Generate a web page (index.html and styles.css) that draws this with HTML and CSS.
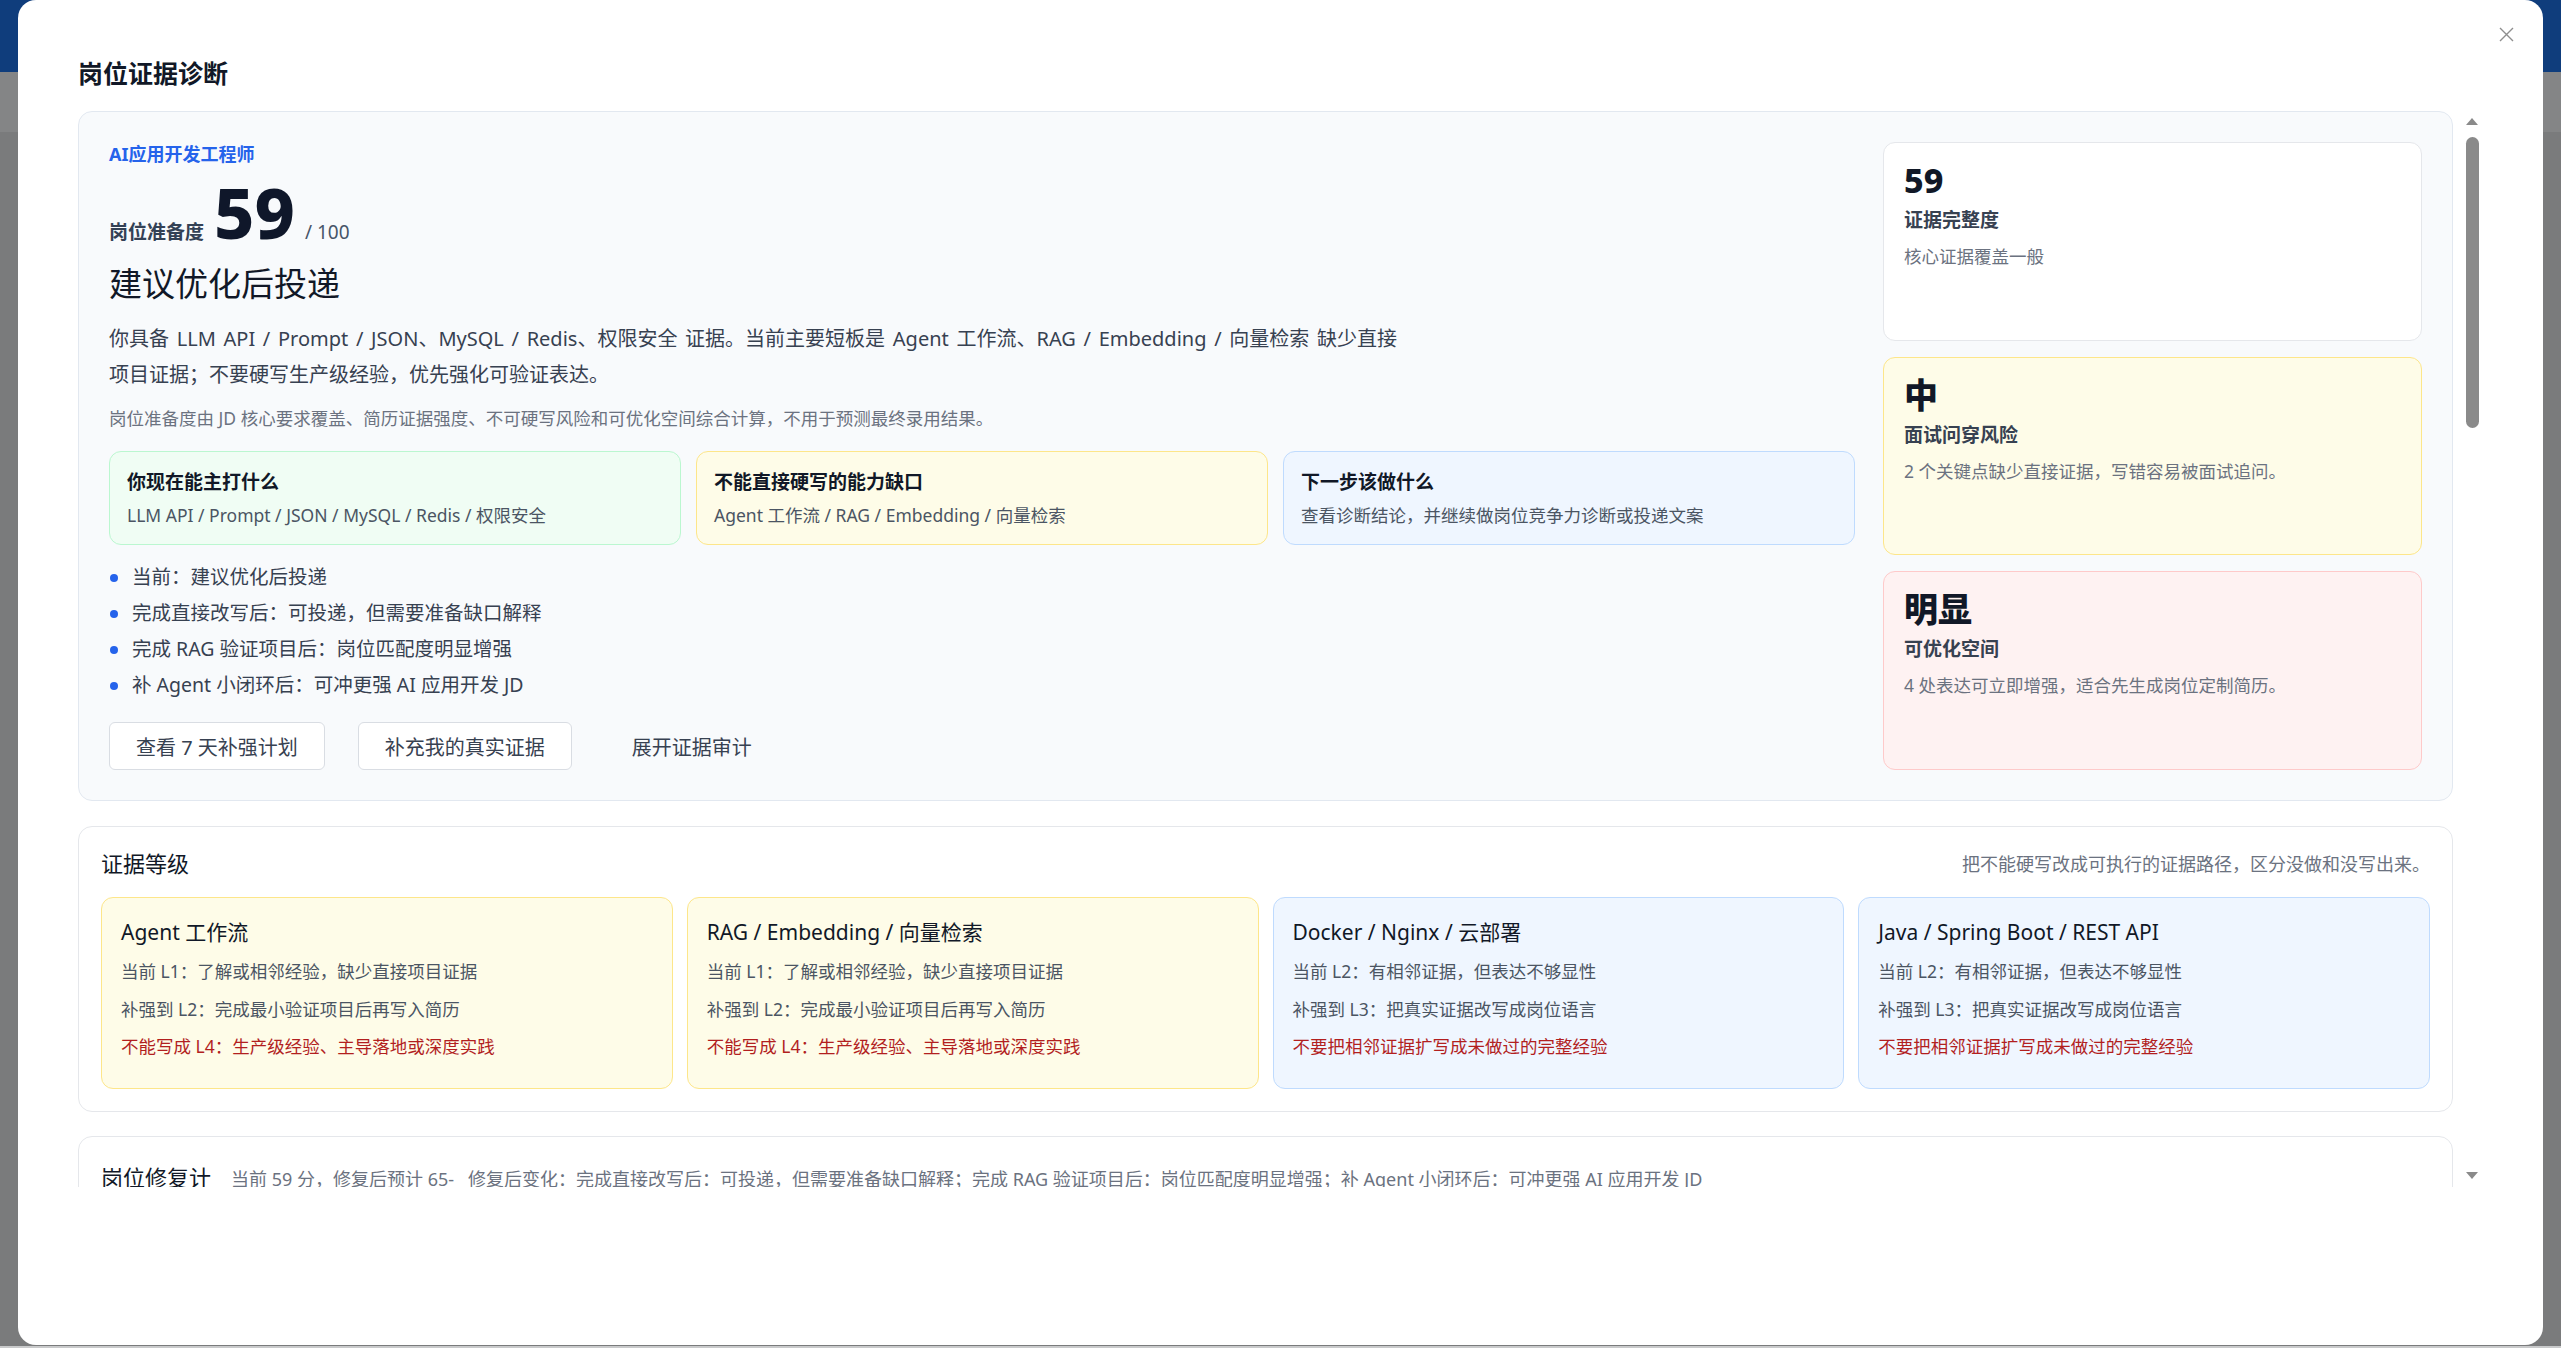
FILE: index.html
```
<!DOCTYPE html>
<html lang="zh-CN">
<head>
  <meta charset="utf-8" />
  <title>岗位证据诊断</title>
  <link rel="stylesheet" href="styles.css">
</head>
<body>
  <!-- 背景页面（被遮罩压暗） -->
  <div class="page">
    <div class="page-top"></div>
    <div class="page-nav"></div>
    <div class="page-body"></div>
    <div class="page-foot"></div>
  </div>

  <div class="modal">
    <button class="modal-close" aria-label="关闭">
      <svg width="15" height="15" viewBox="0 0 15 15"><path d="M1 1 L14 14 M14 1 L1 14" stroke="#8e8e8e" stroke-width="1.4" fill="none"/></svg>
    </button>
    <h1 class="modal-title">岗位证据诊断</h1>

    <div class="modal-body">
      <div class="scroll">

        <!-- 1. 总览 -->
        <section class="hero">
          <div class="hero-main">
            <div class="role">AI应用开发工程师</div>
            <div class="score-row">
              <span class="score-label">岗位准备度</span>
              <span class="score">59</span>
              <span class="score-max">/ 100</span>
            </div>
            <h2 class="verdict">建议优化后投递</h2>
            <p class="summary">你具备 LLM API / Prompt / JSON、MySQL / Redis、权限安全 证据。当前主要短板是 Agent 工作流、RAG / Embedding / 向量检索 缺少直接项目证据；不要硬写生产级经验，优先强化可验证表达。</p>
            <p class="note">岗位准备度由 JD 核心要求覆盖、简历证据强度、不可硬写风险和可优化空间综合计算，不用于预测最终录用结果。</p>

            <div class="focus-grid">
              <div class="focus-card green">
                <div class="focus-title">你现在能主打什么</div>
                <div class="focus-sub">LLM API / Prompt / JSON / MySQL / Redis / 权限安全</div>
              </div>
              <div class="focus-card yellow">
                <div class="focus-title">不能直接硬写的能力缺口</div>
                <div class="focus-sub">Agent 工作流 / RAG / Embedding / 向量检索</div>
              </div>
              <div class="focus-card blue">
                <div class="focus-title">下一步该做什么</div>
                <div class="focus-sub">查看诊断结论，并继续做岗位竞争力诊断或投递文案</div>
              </div>
            </div>

            <ul class="path-list">
              <li>当前：建议优化后投递</li>
              <li>完成直接改写后：可投递，但需要准备缺口解释</li>
              <li>完成 RAG 验证项目后：岗位匹配度明显增强</li>
              <li>补 Agent 小闭环后：可冲更强 AI 应用开发 JD</li>
            </ul>

            <div class="actions">
              <button class="btn">查看 7 天补强计划</button>
              <button class="btn">补充我的真实证据</button>
              <button class="btn btn-text">展开证据审计</button>
            </div>
          </div>

          <aside class="hero-side">
            <div class="stat-card">
              <div class="stat-value">59</div>
              <div class="stat-label">证据完整度</div>
              <div class="stat-desc">核心证据覆盖一般</div>
            </div>
            <div class="stat-card yellow">
              <div class="stat-value">中</div>
              <div class="stat-label">面试问穿风险</div>
              <div class="stat-desc">2 个关键点缺少直接证据，写错容易被面试追问。</div>
            </div>
            <div class="stat-card red">
              <div class="stat-value">明显</div>
              <div class="stat-label">可优化空间</div>
              <div class="stat-desc">4 处表达可立即增强，适合先生成岗位定制简历。</div>
            </div>
          </aside>
        </section>

        <!-- 2. 证据等级 -->
        <section class="panel">
          <div class="panel-head">
            <h3 class="panel-title">证据等级</h3>
            <span class="panel-hint">把不能硬写改成可执行的证据路径，区分没做和没写出来。</span>
          </div>
          <div class="level-grid">
            <div class="level-card yellow">
              <div class="level-title">Agent 工作流</div>
              <div class="level-line">当前 L1：了解或相邻经验，缺少直接项目证据</div>
              <div class="level-line">补强到 L2：完成最小验证项目后再写入简历</div>
              <div class="level-line warn">不能写成 L4：生产级经验、主导落地或深度实践</div>
            </div>
            <div class="level-card yellow">
              <div class="level-title">RAG / Embedding / 向量检索</div>
              <div class="level-line">当前 L1：了解或相邻经验，缺少直接项目证据</div>
              <div class="level-line">补强到 L2：完成最小验证项目后再写入简历</div>
              <div class="level-line warn">不能写成 L4：生产级经验、主导落地或深度实践</div>
            </div>
            <div class="level-card blue">
              <div class="level-title">Docker / Nginx / 云部署</div>
              <div class="level-line">当前 L2：有相邻证据，但表达不够显性</div>
              <div class="level-line">补强到 L3：把真实证据改写成岗位语言</div>
              <div class="level-line warn">不要把相邻证据扩写成未做过的完整经验</div>
            </div>
            <div class="level-card blue">
              <div class="level-title">Java / Spring Boot / REST API</div>
              <div class="level-line">当前 L2：有相邻证据，但表达不够显性</div>
              <div class="level-line">补强到 L3：把真实证据改写成岗位语言</div>
              <div class="level-line warn">不要把相邻证据扩写成未做过的完整经验</div>
            </div>
          </div>
        </section>

        <!-- 3. 岗位修复计划 -->
        <section class="panel panel-fix">
          <div class="fix-row">
            <h3 class="panel-title">岗位修复计</h3>
            <span class="fix-text">当前 59 分，修复后预计 65-&nbsp;&nbsp; 修复后变化：完成直接改写后：可投递，但需要准备缺口解释；完成 RAG 验证项目后：岗位匹配度明显增强；补 Agent 小闭环后：可冲更强 AI 应用开发 JD</span>
          </div>
        </section>
      </div>

      <div class="scrollbar">
        <span class="sb-arrow up"></span>
        <span class="sb-thumb"></span>
        <span class="sb-space"></span>
        <span class="sb-arrow down"></span>
      </div>
    </div>
  </div>
</body>
</html>
```
FILE: styles.css
```
/* 0. 基础 */
body {
  margin: 0;
  padding: 0;
  width: 2561px;
  height: 1348px;
  overflow: hidden;
  position: relative;
  font-family: "Noto Sans", "Noto Sans CJK SC", sans-serif;
  color: #111827;
}
h1, h2, h3, p, ul {
  margin: 0;
  padding: 0;
}

/* 1. 背景页面 + 遮罩颜色 */
.page {
  display: flex;
  flex-direction: column;
  height: 1348px;
}
.page-top {
  height: 72px;
  background-color: #0f3d7c;
}
.page-nav {
  height: 60px;
  background-color: #848586;
}
.page-body {
  flex: 1;
  background-color: #7a7b7c;
}
.page-foot {
  height: 2px;
  background-color: #c9cacb;
}

/* 2. 弹窗 */
.modal {
  position: absolute;
  top: 0;
  left: 18px;
  width: 2525px;
  height: 1345px;
  box-sizing: border-box;
  padding: 56px 0 0 60px;
  background-color: #fff;
  border-radius: 18px;
}
.modal-close {
  position: absolute;
  top: 27px;
  right: 29px;
  width: 15px;
  height: 15px;
  padding: 0;
  border: none;
  background: none;
  display: flex;
}
.modal-title {
  font-size: 25px;
  line-height: 34px;
  font-weight: 700;
  color: #111827;
}
.modal-body {
  display: flex;
  margin-top: 21px;
  height: 1076px;
}
.scroll {
  width: 2375px;
  overflow: hidden;
}

/* 假滚动条 */
.scrollbar {
  width: 29px;
  display: flex;
  flex-direction: column;
}
.sb-arrow {
  margin-left: 13px;
  width: 0;
  height: 0;
  border-left: 6px solid transparent;
  border-right: 6px solid transparent;
}
.sb-arrow.up {
  margin-top: 7px;
  border-bottom: 7px solid #8a8a8a;
}
.sb-arrow.down {
  margin-bottom: 8px;
  border-top: 7px solid #8a8a8a;
}
.sb-thumb {
  margin: 12px 0 0 13px;
  width: 13px;
  height: 291px;
  border-radius: 7px;
  background-color: #8a8a8a;
}
.sb-space {
  flex: 1;
}

/* 3. 总览卡片 */
.hero {
  display: grid;
  grid-template-columns: 1fr 539px;
  column-gap: 28px;
  padding: 30px;
  border: 1px solid #e2e8f0;
  border-radius: 14px;
  background-color: #f8fafc;
}
.role {
  font-size: 18px;
  line-height: 26px;
  font-weight: 700;
  color: #2563eb;
  margin-top: -1px;
}
.score-row {
  display: flex;
  align-items: baseline;
  gap: 10px;
  margin-top: 12px;
}
.score-label {
  font-size: 19px;
  font-weight: 700;
  color: #334155;
}
.score {
  font-size: 70px;
  line-height: 66px;
  font-weight: 800;
  color: #0f172a;
}
.score-max {
  font-size: 19px;
  color: #475569;
}
.verdict {
  margin-top: 17px;
  font-size: 33px;
  line-height: 44px;
  font-weight: 400;
  color: #111827;
}
.summary {
  margin-top: 15px;
  max-width: 1300px;
  font-size: 20px;
  line-height: 36px;
  word-spacing: 2.5px;
  color: #374151;
}
.note {
  margin-top: 13px;
  font-size: 17.5px;
  line-height: 24px;
  color: #6b7280;
}

.focus-grid {
  display: grid;
  grid-template-columns: repeat(3, 1fr);
  gap: 15px;
  margin-top: 21px;
}
.focus-card {
  padding: 17px 17px;
  border-width: 1px;
  border-style: solid;
  border-radius: 12px;
}
.focus-title {
  font-size: 19px;
  line-height: 26px;
  font-weight: 700;
  color: #111827;
}
.focus-sub {
  margin-top: 8px;
  font-size: 17.5px;
  line-height: 24px;
  color: #4b5563;
}
.green {
  background-color: #f0fdf4;
  border-color: #bbf7d0;
}
.yellow {
  background-color: #fefce8;
  border-color: #fde68a;
}
.blue {
  background-color: #eff6ff;
  border-color: #bfdbfe;
}
.red {
  background-color: #fef2f2;
  border-color: #fecaca;
}

.path-list {
  margin-top: 14px;
  list-style: none;
}
.path-list li {
  display: flex;
  align-items: center;
  font-size: 19.5px;
  line-height: 36px;
  color: #374151;
}
.path-list li::before {
  content: "";
  width: 8px;
  height: 8px;
  margin: 2px 14px 0 1px;
  border-radius: 50%;
  background-color: #2563eb;
}

.actions {
  display: flex;
  gap: 33px;
  margin-top: 19px;
}
.btn {
  height: 48px;
  padding: 0 26px;
  border: 1px solid #d9dde3;
  border-radius: 6px;
  background-color: #fff;
  font-family: inherit;
  font-size: 20px;
  color: #374151;
}
.btn-text {
  border-color: transparent;
  background: none;
}

.hero-side {
  display: flex;
  flex-direction: column;
  gap: 16px;
}
.stat-card {
  flex: 1;
  padding: 17px 20px;
  border: 1px solid #e5e7eb;
  border-radius: 12px;
  background-color: #fff;
}
.stat-card.yellow {
  background-color: #fefce8;
  border-color: #fde68a;
}
.stat-card.red {
  background-color: #fef2f2;
  border-color: #fecaca;
}
.stat-value {
  font-size: 34px;
  line-height: 40px;
  font-weight: 800;
  color: #111827;
}
.stat-label {
  margin-top: 8px;
  font-size: 19px;
  line-height: 24px;
  font-weight: 700;
  color: #374151;
}
.stat-desc {
  margin-top: 12px;
  font-size: 17.5px;
  line-height: 24px;
  color: #6b7280;
}

/* 4. 证据等级 / 修复计划 */
.panel {
  margin-top: 25px;
  padding: 21px 22px 22px;
  border: 1px solid #e5e7eb;
  border-radius: 14px;
  background-color: #fff;
}
.panel-head {
  display: flex;
  justify-content: space-between;
  align-items: center;
}
.panel-title {
  font-size: 22px;
  line-height: 30px;
  font-weight: 400;
  color: #111827;
}
.panel-hint {
  font-size: 18px;
  color: #6b7280;
}
.level-grid {
  display: grid;
  grid-template-columns: repeat(4, 1fr);
  gap: 14px;
  margin-top: 19px;
}
.level-card {
  padding: 19px 19px 28px;
  border-width: 1px;
  border-style: solid;
  border-radius: 12px;
}
.level-title {
  font-size: 21px;
  line-height: 30px;
  color: #111827;
}
.level-line {
  margin-top: 10px;
  font-size: 17.5px;
  line-height: 28px;
  color: #4b5563;
}
.level-line.warn {
  margin-top: 9px;
  color: #b21f1f;
}

.panel-fix {
  margin-top: 24px;
  padding-top: 25px;
}
.fix-row {
  display: flex;
  align-items: baseline;
  gap: 20px;
}
.fix-text {
  font-size: 18px;
  color: #6b7280;
}
```
